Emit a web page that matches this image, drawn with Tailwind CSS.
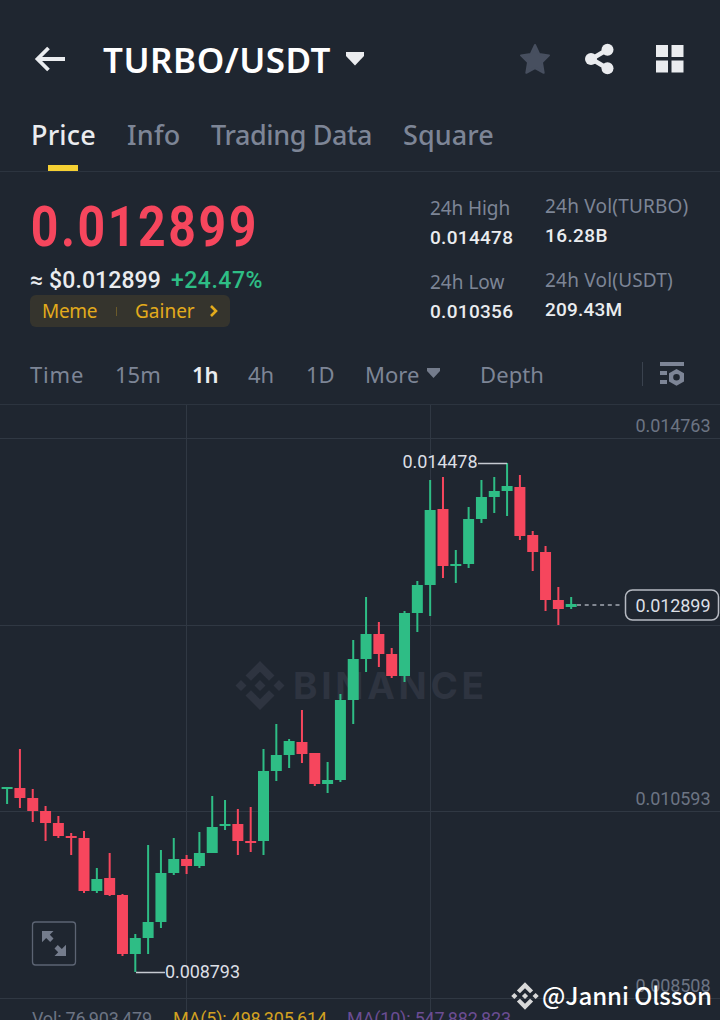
<!DOCTYPE html>
<html lang="en">
<head>
<meta charset="utf-8">
<title>TURBO/USDT</title>
<script src="https://cdn.jsdelivr.net/npm/@tailwindcss/browser@4"></script>
</head>
<body class="bg-[#1f2630]">
<div class="flex h-[1020px] w-[720px] flex-col overflow-hidden bg-[#1f2630] font-['Noto_Sans',sans-serif] text-[#7d8596]">

  <header class="flex h-[104px] shrink-0 items-center pt-[14px] pl-[34px] pr-[36px]">
    <svg class="h-[26px] w-[32px]" viewBox="0 0 32 26" fill="none" stroke="#eaecef" stroke-width="3.8"><path d="M31 13H4M14.5 2 3.5 13l11 11"/></svg>
    <h1 class="ml-[37px] w-[242px] whitespace-nowrap pt-[2px] text-[35px]/[40px] font-semibold tracking-[0.5px] text-white">TURBO/USDT</h1>
    <svg class="h-[16px] w-[20px]" viewBox="0 0 20 16" fill="#eaecef"><path d="M1 1h18v4l-9 9.5L1 5z"/></svg>
    <svg class="ml-auto h-[32px] w-[32px]" viewBox="0 0 32 32" fill="#474f5f" stroke="#474f5f" stroke-width="2" stroke-linejoin="round"><path d="m16 2 4.200 9 9.800 1.400-7 7 1.700 10.400L16 25l-8.700 4.800L9 19.400l-7-7L11.800 11z"/></svg>
    <svg class="ml-[33px] h-[32px] w-[32px]" viewBox="0 0 32 32" fill="#eaecef"><path d="M23.500 6.500 7.500 16l16 9.500" fill="none" stroke="#eaecef" stroke-width="4.500"/><circle cx="23.500" cy="6.700" r="6"/><circle cx="7" cy="16" r="6"/><circle cx="23.500" cy="25.300" r="6"/></svg>
    <svg class="ml-[40px] h-[28px] w-[28px]" viewBox="0 0 28 28" fill="#eaecef"><path d="M0 0h12v12H0zM15.500 0h12v12h-12zM0 15.500h12v12H0zM15.500 15.500h12v12h-12z"/></svg>
  </header>

  <nav class="flex h-[68px] shrink-0 border-b border-[#2c343f] pl-[31px] text-[27px]/[36px] font-medium whitespace-nowrap">
    <div class="flex w-[96px] flex-col pt-[13px] tracking-[0.2px] text-[#eaecef]">Price<i class="mt-[12px] ml-[17px] h-[6px] w-[30px] bg-[#f5d033]"></i></div>
    <div class="w-[84px] pt-[13px] tracking-[0.2px]">Info</div>
    <div class="w-[192px] pt-[13px] tracking-[-0.4px]">Trading Data</div>
    <div class="pt-[13px] tracking-[0.1px]">Square</div>
  </nav>

  <section class="flex h-[174px] shrink-0 whitespace-nowrap">
    <div class="w-[430px] pl-[30px]">
      <div class="mt-[26px] h-[58px] w-fit origin-left scale-x-[.86] pl-[1px] font-['Roboto'] text-[56px]/[58px] font-bold tracking-[3.0px] text-[#f6465d]">0.012899</div>
      <div class="mt-[12px] flex h-[26px] font-['Roboto'] text-[23px]/[26px] font-medium text-[#eaecef]"><span class="w-[141px] tracking-[0.1px]">≈ $0.012899</span><span class="tracking-[0.5px] text-[#2ebd85]">+24.47%</span></div>
      <div class="mt-[1px] flex h-[32px] w-[200px] items-center rounded-[6px] bg-[#35342d] pl-[12px] text-[19px]/[28px] text-[#e3ab1c]"><span class="w-[74px] tracking-[-0.3px]">Meme</span><i class="mr-[18px] h-[9px] w-px bg-[#6b5a2a]"></i><span class="w-[75px]">Gainer</span><svg class="h-[12px] w-[8px]" viewBox="0 0 8 12" fill="none" stroke="#e3ab1c" stroke-width="2.600"><path d="m1 1 5 5-5 5"/></svg></div>
    </div>
    <dl class="w-[115px] pt-[22px] text-[19px]/[28px]">
      <dt class="tracking-[-0.1px]">24h High</dt><dd class="h-[46px] font-['Roboto'] font-medium leading-[32px] tracking-[0.3px] text-[#eaecef]">0.014478</dd>
      <dt>24h Low</dt><dd class="font-['Roboto'] font-medium leading-[32px] tracking-[0.3px] text-[#eaecef]">0.010356</dd>
    </dl>
    <dl class="pt-[20px] text-[19px]/[28px]">
      <dt class="tracking-[0.2px]">24h Vol(TURBO)</dt><dd class="h-[46px] font-['Roboto'] font-medium leading-[32px] tracking-[0.4px] text-[#eaecef]">16.28B</dd>
      <dt class="tracking-[0.2px]">24h Vol(USDT)</dt><dd class="font-['Roboto'] font-medium leading-[32px] tracking-[0.2px] text-[#eaecef]">209.43M</dd>
    </dl>
  </section>

  <div class="flex h-[59px] shrink-0 items-center border-b border-[#2c343f] pb-[2px] pl-[30px] text-[22px]/[30px] whitespace-nowrap">
    <span class="w-[85px] tracking-[0.8px]">Time</span>
    <span class="w-[77px]">15m</span>
    <span class="w-[56px] font-semibold text-[#eaecef]">1h</span>
    <span class="w-[58px]">4h</span>
    <span class="w-[59px]">1D</span>
    <span class="w-[62px]">More</span>
    <svg class="h-[12px] w-[14px] -translate-y-[1px]" viewBox="0 0 14 12" fill="#747c8c"><path d="M0 1h13v3l-6.500 7L0 4z"/></svg>
    <span class="ml-[39px] w-[162px] tracking-[0.1px]">Depth</span>
    <i class="mr-[17px] h-[24px] w-px bg-[#3a424e]"></i>
    <svg class="h-[26px] w-[25px]" viewBox="0 0 25 26" fill="#7d8596"><path d="M0 1h24v4H0zM0 10h7v4H0zM0 19h7v4H0z"/><path fill-rule="evenodd" d="m16.500 8 7.500 4.200v8.200l-7.500 4.300L9 20.400v-8.200zm0 5a3.300 3.300 0 1 0 0 6.600 3.300 3.300 0 0 0 0-6.600z"/></svg>
  </div>

  <svg id="chart" class="block h-[615px] w-[720px] shrink-0 font-['Roboto']" viewBox="0 405 720 615">
    <defs><g id="mark"><path d="M-14.500-10 0-24.500 14.500-10 9-4.700 0-13.700-9-4.700zM-14.500 10 0 24.500 14.500 10 9 4.700 0 13.700-9 4.700zM0-5.500 5.500 0 0 5.500-5.500 0zM-19-5.500l5.500 5.500-5.500 5.500L-24.500 0zM19-5.500 24.500 0 19 5.500 13.500 0z"/></g></defs>
    <g fill="#2e3440"><use href="#mark" x="260" y="685.500"/><text x="293" y="699" font-family="Inter" font-weight="700" font-size="37" textLength="191">BINANCE</text></g>
    <path d="M0 438.500H720M0 625.500H720M0 811.500H720M0 998.500H720M186.500 405V1020M430.500 405V1020" stroke="#303843" fill="none"/>
    <g id="candles"></g>
    <path d="M478 463.500h29M136 972.500h29" stroke="#c6cad1" stroke-width="1.300"/>
    <path d="M577 605h46" stroke="#a4a9b2" stroke-width="1.500" stroke-dasharray="4 3.700"/>
    <g font-size="18" fill="#6c7483">
      <text x="635.500" y="432" textLength="75">0.014763</text><text x="635.500" y="805" textLength="75">0.010593</text><text x="635.500" y="992" textLength="75">0.008508</text>
    </g>
    <rect x="625.500" y="590" width="93" height="30" rx="7" fill="#1f2630" stroke="#b6bac2" stroke-width="1.500"/>
    <g font-size="18" fill="#dcdfe5"><text x="635.500" y="612" textLength="75">0.012899</text><text x="402.500" y="468" textLength="75">0.014478</text><text x="165" y="978" textLength="75">0.008793</text></g>
    <g font-size="18"><text x="32" y="1024.500" fill="#6c7483" textLength="120">Vol: 76,903,479</text><text x="173" y="1024.500" fill="#d2a121" textLength="154">MA(5): 498,305,614</text><text x="347" y="1024.500" fill="#6b4d93" textLength="164">MA(10): 547,882,823</text></g>
    <rect x="32.500" y="922" width="43" height="43" rx="3" fill="#1f2630" stroke="#5c6473" stroke-width="1.300"/>
    <path d="M42 931h11.500l-3.700 3.700 3.700 3.900-3.300 3.400-4-4-4.200 4.200zM66 956H54.500l3.700-3.700-3.700-3.900 3.300-3.400 4 4 4.200-4.200z" fill="#747c8c"/>
    <g fill="#d9d9d9"><use href="#mark" transform="translate(525 996) scale(.56)"/></g>
    <text x="542" y="1005" font-family="Noto Sans CJK SC" font-weight="500" font-size="24" fill="#fff" textLength="170">@Janni Olsson</text>
  </svg>
</div>
<script>
// Hourly candles: rising flag, then high, body top, body bottom, low.
const candles = [
[1,787,787,789,804],[0,749,788,798,808],[0,789,798,811,822],[0,806,811,823,841],[0,816,823,836,838],[0,833,836,838,855],
[0,831,838,891,893],[1,868,879,891,893],[0,853,878,895,896],[0,894,895,954,956],[1,934,938,954,972],[1,845,922,938,954],
[1,850,873,922,928],[1,838,859,873,875],[0,855,859,866,874],[1,832,853,866,868],[1,796,827,853,853],[1,800,824,826,830],
[0,809,824,841,855],[0,807,841,843,852],[1,749,771,841,855],[1,724,755,771,781],[1,739,741,755,768],[0,710,742,754,763],
[0,753,753,784,786],[1,762,780,784,793],[1,694,700,780,782],[1,640,659,700,724],[1,597,634,659,672],[0,622,634,654,667],
[0,648,654,676,678],[1,611,613,676,682],[1,581,585,613,632],[1,480,510,585,616],[0,477,509,566,578],[1,550,564,566,583],
[1,507,519,564,568],[1,480,497,519,523],[1,477,491,497,513],[1,463,486,491,516],[0,475,487,536,540],[0,531,535,552,571],
[0,546,552,600,611],[0,587,600,609,625],[1,597,604,607,609]];
document.getElementById('candles').innerHTML = candles.map(([up, hi, top, bottom, lo], i) => {
  const x = 7.100 + i * 12.820;
  return `<g fill="${up ? '#2ebd85' : '#f6465d'}"><rect x="${x - 1}" y="${hi}" width="2" height="${lo - hi}"/><rect x="${x - 5.500}" y="${top}" width="11" height="${bottom - top}"/></g>`;
}).join('');
</script>
</body>
</html>
